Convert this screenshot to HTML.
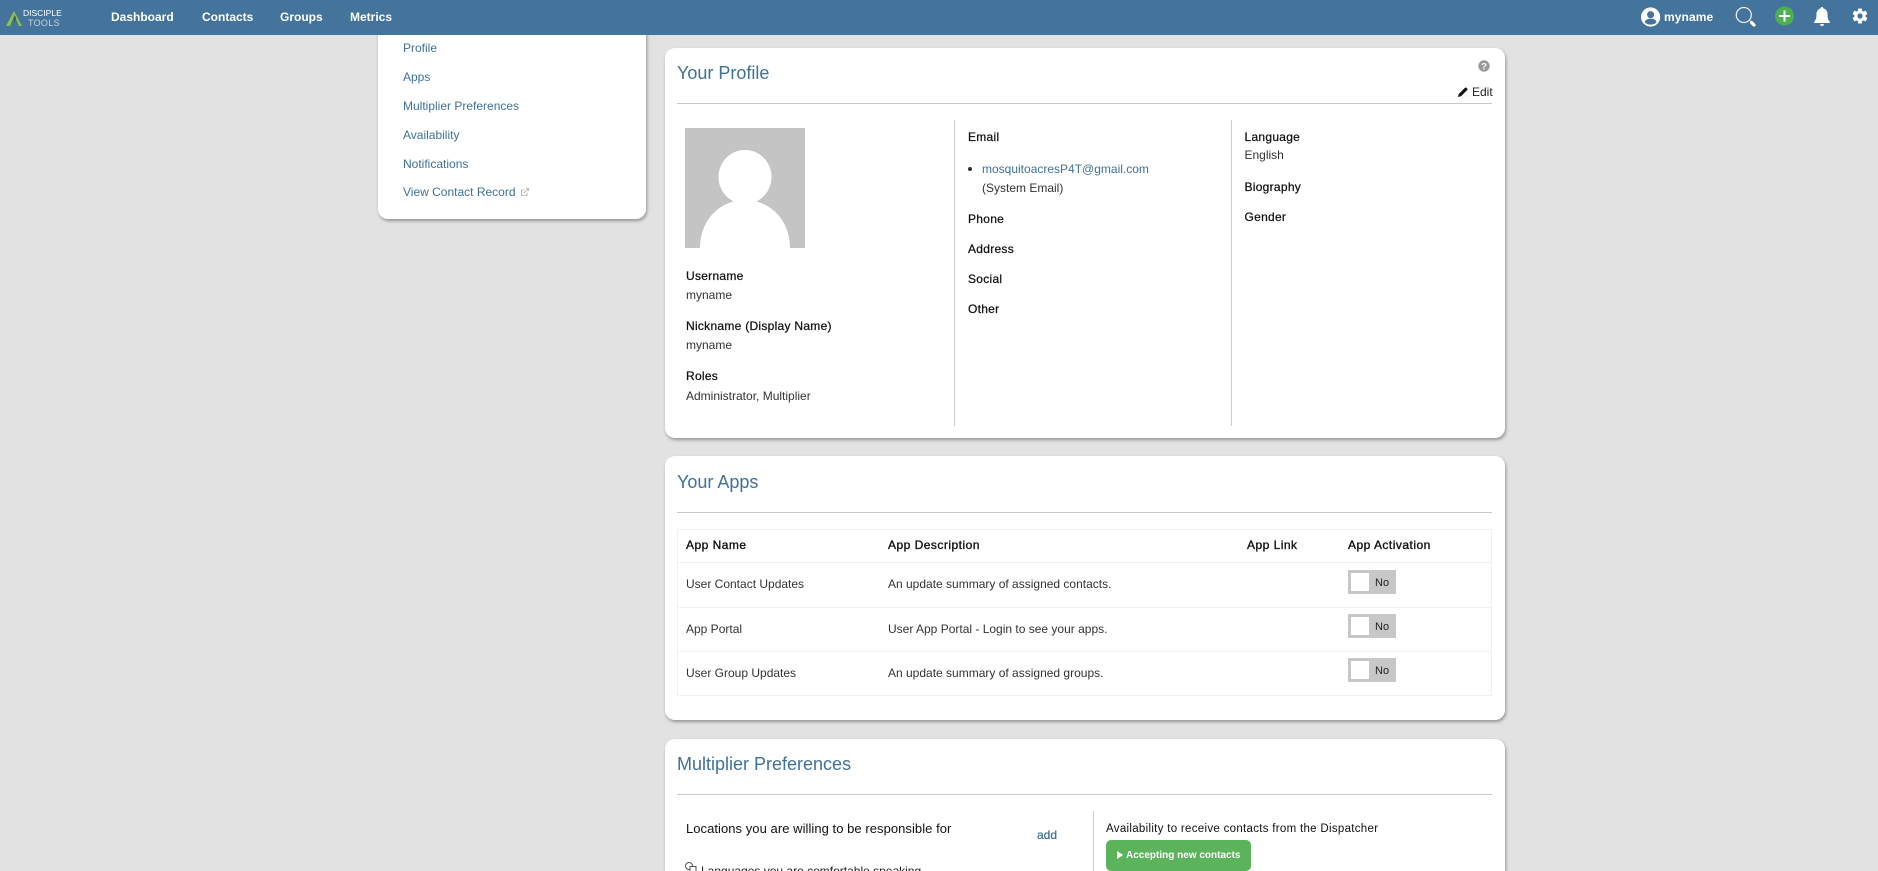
<!DOCTYPE html>
<html><head><meta charset="utf-8"><title>Settings</title>
<style>
html,body{margin:0;padding:0;width:1878px;height:871px;overflow:hidden;background:#e2e2e2;font-family:"Liberation Sans",Arial,sans-serif;color:#222}
#w{position:relative;width:1878px;height:871px;overflow:hidden;background:#e2e2e2}
.a,.c,.l,.t,.h,.v,.n,.s,.k,.r{position:absolute;white-space:nowrap;line-height:16px}
.c{background:#fff;border-radius:10px;box-shadow:1px 2px 3px rgba(0,0,0,.34);overflow:hidden}
.n{font-size:12px;font-weight:bold;color:#fff;top:9px}
.s{font-size:12px;color:#3f729b;left:403px}
.t{font-size:18px;color:#3f729b;left:677px;line-height:22px}
.h{height:1px;background:#c9c9c9;left:677px;width:815px}
.l{font-size:12px;color:#111;-webkit-text-stroke:.25px #111;letter-spacing:.28px}
.l.b{-webkit-text-stroke:.35px #111;letter-spacing:.48px}
.v{font-size:12px;color:#333}
.d{position:absolute;width:1px;background:#ccc}
.k{background:#f0f0f0;left:677px;width:815px;height:1px}
.r{font-size:12px;color:#333}
.tg{position:absolute;left:1348px;width:48px;height:24px;background:#c7c7c7}
.tg i{position:absolute;left:3px;top:3px;width:18px;height:18px;background:#fff}
.tg b{position:absolute;left:27px;top:4.500px;font-weight:normal;font-size:11px;line-height:16px;color:#222}
svg{position:absolute;overflow:visible}
#clip{position:absolute;left:0;top:855px;width:1878px;height:16px;overflow:hidden}
</style></head><body><div id="w">
<!-- side card -->
<div class="c" style="left:378px;top:10px;width:268px;height:209px"></div>
<div class="s" style="top:40px">Profile</div>
<div class="s" style="top:69px">Apps</div>
<div class="s" style="top:98px">Multiplier Preferences</div>
<div class="s" style="top:127px">Availability</div>
<div class="s" style="top:156px">Notifications</div>
<div class="s" style="top:184px">View Contact Record</div>
<svg style="left:521px;top:188px" width="8" height="8" viewBox="0 0 8 8"><path d="M6 4.500V7.500H.5V2H3.500M3 5L7.500.5M5 .5h2.500V3" fill="none" stroke="#aaa" stroke-width=".8"/></svg>

<div class="a" style="left:0;top:0;width:1878px;height:35px;background:#44749b"></div>

<svg style="left:5px;top:9px" width="18" height="18" viewBox="0 0 18 18"><path d="M1 17L9 2l1 3-5 12z" fill="#8bc34a"/><path d="M9 2l8 15h-3L9.600 7z" fill="#8bc34a"/><path d="M9.400 6l1.600 3-2 5z" fill="#2a4a55"/></svg>
<div class="a" style="left:23px;top:8px;font-size:8.500px;line-height:10px;color:#fff">DISCIPLE</div>
<div class="a" style="left:28px;top:18px;font-size:9px;line-height:10px;color:#c5d3de;letter-spacing:.3px">TOOLS</div>

<div class="n" style="left:111px">Dashboard</div>
<div class="n" style="left:202px">Contacts</div>
<div class="n" style="left:280px">Groups</div>
<div class="n" style="left:350px">Metrics</div>

<svg style="left:1641px;top:7px" width="20" height="20" viewBox="0 0 20 20"><circle cx="9.600" cy="10" r="9.600" fill="#fff"/><circle cx="9.600" cy="7.600" r="3.500" fill="#44749b"/><path d="M3.600 15.200c.8-2.600 3.200-3.600 6-3.600s5.200 1 6 3.600c-1.500 1.500-3.700 2.400-6 2.400s-4.500-.9-6-2.400z" fill="#44749b"/></svg>
<div class="a" style="left:1664px;top:9px;font-size:12px;font-weight:bold;color:#fff;letter-spacing:.1px">myname</div>
<svg style="left:1735px;top:6px" width="22" height="22" viewBox="0 0 22 22"><circle cx="8.800" cy="9" r="7.500" fill="none" stroke="#e8eef3" stroke-width="1.300"/><path d="M15 15l1.500 1.500" stroke="#fff" stroke-width="1"/><path d="M16.500 16.500l2.500 2.500" stroke="#fff" stroke-width="3.200" stroke-linecap="round"/></svg>
<svg style="left:1775px;top:6px" width="20" height="20" viewBox="0 0 20 20"><circle cx="9.500" cy="10" r="9.500" fill="#4caf50"/><path d="M9.500 4.500v11M4 10h11" stroke="#fff" stroke-width="2"/></svg>
<svg style="left:1814px;top:6px" width="16" height="21" viewBox="0 0 16 21"><path d="M8 1c.8 0 1.300.5 1.300 1.200C12 3 13.500 5.200 13.500 8c0 4 .7 6 2.300 7.800V17H.2v-1.200C1.800 14 2.500 12 2.500 8c0-2.800 1.500-5 4.200-5.800C6.700 1.500 7.200 1 8 1z" fill="#fff"/><path d="M6 18h4c0 1.200-.9 2-2 2s-2-.8-2-2z" fill="#fff"/></svg>
<svg style="left:1851px;top:7px" width="18" height="18" viewBox="0 0 24 24"><path fill="#fff" d="M19.400 13a7.600 7.600 0 0 0 0-2l2.400-1.900-2.400-4.200-2.900 1.200a7.500 7.500 0 0 0-1.700-1L14.400 2H9.600l-.4 3.100a7.500 7.500 0 0 0-1.700 1L4.600 4.900 2.200 9.100 4.600 11a7.600 7.600 0 0 0 0 2l-2.400 1.900 2.400 4.200 2.900-1.200c.5.400 1.100.7 1.700 1l.4 3.100h4.800l.4-3.100c.6-.3 1.200-.6 1.700-1l2.900 1.200 2.400-4.200zM12 15.500a3.500 3.500 0 1 1 0-7 3.500 3.500 0 0 1 0 7z"/></svg>

<!-- profile card -->
<div class="c" style="left:665px;top:48px;width:840px;height:390px"></div>
<div class="t" style="top:62px">Your Profile</div>
<svg style="left:1478px;top:60px" width="12" height="12" viewBox="0 0 12 12"><circle cx="6" cy="6" r="5.700" fill="#999"/><text x="6" y="9.500" font-size="9.500" font-weight="bold" fill="#fff" text-anchor="middle" font-family="Liberation Sans">?</text></svg>
<svg style="left:1458px;top:87px" width="10" height="10" viewBox="0 0 10 10"><path d="M0 10l.8-3L7 .8a1 1 0 0 1 1.400 0l.8.8a1 1 0 0 1 0 1.400L3 9.200z" fill="#111"/></svg>
<div class="a" style="left:1472px;top:84px;font-size:12px;color:#222">Edit</div>
<div class="h" style="top:103px"></div>
<svg style="left:685px;top:128px" width="120" height="120" viewBox="0 0 120 120"><rect width="120" height="120" fill="#c4c4c4"/><ellipse cx="60" cy="49" rx="26.500" ry="27" fill="#fff"/><path d="M15 120c0-28 20-48 45-48s45 20 45 48z" fill="#fff"/></svg>
<div class="l" style="left:686px;top:268px">Username</div>
<div class="v" style="left:686px;top:287px">myname</div>
<div class="l" style="left:686px;top:318px">Nickname (Display Name)</div>
<div class="v" style="left:686px;top:337px">myname</div>
<div class="l" style="left:686px;top:368px">Roles</div>
<div class="v" style="left:686px;top:388px">Administrator, Multiplier</div>
<div class="d" style="left:954px;top:120px;height:306px"></div>
<div class="d" style="left:1231px;top:120px;height:306px"></div>
<div class="l" style="left:968px;top:129px">Email</div>
<div class="a" style="left:968px;top:167px;width:4px;height:4px;border-radius:50%;background:#333"></div>
<div class="a" style="left:982px;top:161px;font-size:12px;color:#3f729b">mosquitoacresP4T@gmail.com</div>
<div class="v" style="left:982px;top:180px">(System Email)</div>
<div class="l" style="left:968px;top:211px">Phone</div>
<div class="l" style="left:968px;top:241px">Address</div>
<div class="l" style="left:968px;top:271px">Social</div>
<div class="l" style="left:968px;top:301px">Other</div>
<div class="l" style="left:1244.500px;top:129px">Language</div>
<div class="v" style="left:1244.500px;top:147px">English</div>
<div class="l" style="left:1244.500px;top:179px">Biography</div>
<div class="l" style="left:1244.500px;top:209px">Gender</div>

<!-- apps card -->
<div class="c" style="left:665px;top:456px;width:840px;height:264px"></div>
<div class="t" style="top:471px">Your Apps</div>
<div class="h" style="top:512px"></div>
<div class="a" style="left:677px;top:529px;width:813px;height:165px;border:1px solid #f0f0f0"></div>
<div class="k" style="top:562px"></div>
<div class="k" style="top:607px"></div>
<div class="k" style="top:651px"></div>
<div class="l b" style="left:686px;top:537px">App Name</div>
<div class="l b" style="left:888px;top:537px">App Description</div>
<div class="l b" style="left:1247px;top:537px">App Link</div>
<div class="l b" style="left:1348px;top:537px">App Activation</div>
<div class="r" style="left:686px;top:575.500px">User Contact Updates</div>
<div class="r" style="left:888px;top:575.500px">An update summary of assigned contacts.</div>
<div class="r" style="left:686px;top:620.500px">App Portal</div>
<div class="r" style="left:888px;top:620.500px">User App Portal - Login to see your apps.</div>
<div class="r" style="left:686px;top:664.500px">User Group Updates</div>
<div class="r" style="left:888px;top:664.500px">An update summary of assigned groups.</div>
<div class="tg" style="top:570px"><i></i><b>No</b></div>
<div class="tg" style="top:614px"><i></i><b>No</b></div>
<div class="tg" style="top:658px"><i></i><b>No</b></div>

<!-- multiplier card -->
<div class="c" style="left:665px;top:739px;width:840px;height:132px;border-radius:10px 10px 0 0"></div>
<div class="t" style="top:753px">Multiplier Preferences</div>
<div class="h" style="top:794px"></div>
<div class="d" style="left:1093px;top:811px;height:60px"></div>
<div class="a" style="left:686px;top:821px;font-size:13px;color:#111;letter-spacing:.05px">Locations you are willing to be responsible for</div>
<div class="a" style="left:1037px;top:827px;font-size:12px;color:#3f729b;-webkit-text-stroke:.25px #3f729b">add</div>
<div id="clip">
<svg style="left:685px;top:7px" width="12" height="9" viewBox="0 0 12 9"><circle cx="4" cy="4" r="3.500" fill="none" stroke="#555"/><rect x="5" y="4.500" width="6" height="6" fill="#fff" stroke="#555"/></svg>
<div class="a" style="left:701px;top:8px;font-size:12px;color:#222;height:8px;overflow:hidden">Languages you are comfortable speaking</div>
</div>
<div class="a" style="left:1106px;top:821px;font-size:11.500px;color:#111;letter-spacing:.3px">Availability to receive contacts from the Dispatcher</div>
<div class="a" style="left:1106px;top:840px;width:145px;height:31px;background:#5bb35c;border-radius:5px"></div>
<svg style="left:1117px;top:851px" width="6" height="8" viewBox="0 0 6 8"><path d="M0 0l6 4-6 4z" fill="#fff"/></svg>
<div class="a" style="left:1126px;top:848px;font-size:10px;font-weight:bold;color:#fff">Accepting new contacts</div>
</div></body></html>
